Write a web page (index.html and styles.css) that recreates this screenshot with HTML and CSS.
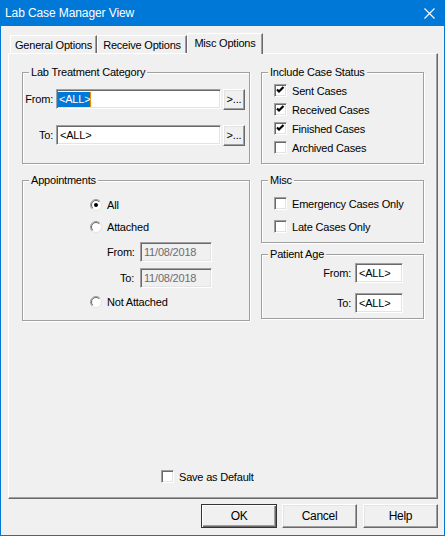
FILE: index.html
```html
<!DOCTYPE html>
<html>
<head>
<meta charset="utf-8">
<title>Lab Case Manager View</title>
<link rel="stylesheet" href="styles.css">
</head>
<body>
<div class="window">
  <div class="titlebar">
    <span class="title">Lab Case Manager View</span>
    <svg class="close" width="11" height="11" viewBox="0 0 11 11"><path d="M0.5 0.5 L10.5 10.5 M10.5 0.5 L0.5 10.5" stroke="#fff" stroke-width="1.1" fill="none"/></svg>
  </div>
  <div class="dialog">
    <div class="tabs">
      <div class="tab tab-general">General Options</div>
      <div class="tab tab-receive">Receive Options</div>
      <div class="tab tab-misc">Misc Options</div>
    </div>
    <div class="panel">
      <div class="columns">
        <div class="col col-left">
          <div class="group group-ltc">
            <span class="legend">Lab Treatment Category</span>
            <div class="field-row">
              <span class="lbl">From:</span>
              <div class="edit edit-wide"><span class="sel">&lt;ALL&gt;</span></div>
              <div class="btn btn-browse">&gt;...</div>
            </div>
            <div class="field-row row-to">
              <span class="lbl">To:</span>
              <div class="edit edit-wide"><span class="val">&lt;ALL&gt;</span></div>
              <div class="btn btn-browse">&gt;...</div>
            </div>
          </div>
          <div class="group group-appt">
            <span class="legend">Appointments</span>
            <div class="radio-row">
              <svg class="radio" width="12" height="12" viewBox="0 0 12 12"><circle cx="6" cy="6" r="5.5" fill="#fff" stroke="#e3e3e3"/><path d="M2.1 9.9 A5.5 5.5 0 0 1 9.9 2.1" stroke="#a0a0a0" fill="none"/><path d="M2.8 9.2 A4.5 4.5 0 0 1 9.2 2.8" stroke="#696969" fill="none"/><circle cx="6" cy="6" r="2" fill="#000"/></svg>
              <span>All</span>
            </div>
            <div class="radio-row radio-attached">
              <svg class="radio" width="12" height="12" viewBox="0 0 12 12"><circle cx="6" cy="6" r="5.5" fill="#fff" stroke="#e3e3e3"/><path d="M2.1 9.9 A5.5 5.5 0 0 1 9.9 2.1" stroke="#a0a0a0" fill="none"/><path d="M2.8 9.2 A4.5 4.5 0 0 1 9.2 2.8" stroke="#696969" fill="none"/></svg>
              <span>Attached</span>
            </div>
            <div class="sub-row">
              <span class="lbl-date">From:</span>
              <div class="edit edit-date"><span class="val">11/08/2018</span></div>
            </div>
            <div class="sub-row">
              <span class="lbl-date">To:</span>
              <div class="edit edit-date"><span class="val">11/08/2018</span></div>
            </div>
            <div class="radio-row radio-notattached">
              <svg class="radio" width="12" height="12" viewBox="0 0 12 12"><circle cx="6" cy="6" r="5.5" fill="#fff" stroke="#e3e3e3"/><path d="M2.1 9.9 A5.5 5.5 0 0 1 9.9 2.1" stroke="#a0a0a0" fill="none"/><path d="M2.8 9.2 A4.5 4.5 0 0 1 9.2 2.8" stroke="#696969" fill="none"/></svg>
              <span>Not Attached</span>
            </div>
          </div>
        </div>
        <div class="col col-right">
          <div class="group group-status">
            <span class="legend">Include Case Status</span>
            <div class="check-row">
              <span class="cb"><svg width="11" height="11" viewBox="0 0 11 11"><path d="M2 4.5 L4 6.5 L8.5 2" stroke="#000" stroke-width="2.2" fill="none"/></svg></span>
              <span>Sent Cases</span>
            </div>
            <div class="check-row">
              <span class="cb"><svg width="11" height="11" viewBox="0 0 11 11"><path d="M2 4.5 L4 6.5 L8.5 2" stroke="#000" stroke-width="2.2" fill="none"/></svg></span>
              <span>Received Cases</span>
            </div>
            <div class="check-row">
              <span class="cb"><svg width="11" height="11" viewBox="0 0 11 11"><path d="M2 4.5 L4 6.5 L8.5 2" stroke="#000" stroke-width="2.2" fill="none"/></svg></span>
              <span>Finished Cases</span>
            </div>
            <div class="check-row">
              <span class="cb"></span>
              <span>Archived Cases</span>
            </div>
          </div>
          <div class="group group-misc">
            <span class="legend">Misc</span>
            <div class="check-row">
              <span class="cb"></span>
              <span>Emergency Cases Only</span>
            </div>
            <div class="check-row check-late">
              <span class="cb"></span>
              <span>Late Cases Only</span>
            </div>
          </div>
          <div class="group group-age">
            <span class="legend">Patient Age</span>
            <div class="age-row">
              <span class="lbl-age">From:</span>
              <div class="edit edit-age"><span class="val">&lt;ALL&gt;</span></div>
            </div>
            <div class="age-row age-to">
              <span class="lbl-age">To:</span>
              <div class="edit edit-age"><span class="val">&lt;ALL&gt;</span></div>
            </div>
          </div>
        </div>
      </div>
      <div class="save-row">
        <span class="cb"></span>
        <span>Save as Default</span>
      </div>
    </div>
    <div class="buttons">
      <div class="btn btn-cmd btn-ok">OK</div>
      <div class="btn btn-cmd">Cancel</div>
      <div class="btn btn-cmd">Help</div>
    </div>
  </div>
</div>
</body>
</html>
```

FILE: styles.css
```css
* { box-sizing: border-box; }

body {
  margin: 0;
  background: #f0f0f0;
  font-family: "Liberation Sans", Arial, sans-serif;
  font-size: 11px;
  letter-spacing: -0.2px;
  color: #000;
}

.window {
  width: 445px;
  height: 536px;
  border: 1px solid #0078d7;
  border-top: 0;
  background: #f0f0f0;
  display: flex;
  flex-direction: column;
}

.titlebar {
  height: 26px;
  margin: 0 -1px;
  background: #0078d7;
  color: #fff;
  display: flex;
  align-items: center;
  justify-content: space-between;
  padding: 0 10px 0 5px;
}

.title {
  font-size: 12px;
  letter-spacing: -0.1px;
  line-height: 14px;
}

.close { display: block; }

.dialog {
  flex: 1;
  display: flex;
  flex-direction: column;
  padding: 7px 6px 7px 7px;
}

.tabs {
  display: flex;
  align-items: flex-end;
  height: 20px;
  padding-left: 2px;
  position: relative;
  z-index: 1;
}

.tab {
  height: 18px;
  border-top: 1px solid #fff;
  border-left: 1px solid #fff;
  border-right: 1px solid #696969;
  box-shadow: inset -1px 0 #a0a0a0;
  display: flex;
  align-items: center;
  justify-content: center;
  white-space: nowrap;
}

.tab-general { width: 87px; }
.tab-receive { width: 90px; }

.tab-misc {
  width: 76px;
  height: 21px;
  margin-bottom: -1px;
  background: #f0f0f0;
  padding-bottom: 3px;
}

.panel {
  height: 446px;
  border-top: 1px solid #fff;
  border-left: 1px solid #fff;
  border-right: 1px solid #696969;
  border-bottom: 1px solid #696969;
  box-shadow: inset -1px -1px #a0a0a0;
  padding: 18px 0 0 13px;
  display: flex;
  flex-direction: column;
}

.columns {
  display: flex;
  gap: 11px;
}

.col { display: flex; flex-direction: column; }
.col-left { width: 228px; }
.col-right { width: 163px; }

.group {
  position: relative;
  border: 1px solid #a0a0a0;
  box-shadow: inset 1px 1px #fff, 1px 1px #fff;
}

.legend {
  position: absolute;
  top: -7px;
  left: 6px;
  padding: 0 2px;
  background: #f0f0f0;
  line-height: 13px;
  white-space: nowrap;
}

/* Lab Treatment Category */
.group-ltc {
  height: 92px;
  padding: 16px 0 0 2px;
}

.field-row {
  display: flex;
  align-items: flex-start;
}

.row-to { margin-top: 15px; }

.lbl {
  width: 28px;
  text-align: right;
  line-height: 20px;
  margin-right: 3px;
}

.edit {
  height: 20px;
  background: #fff;
  border-top: 1px solid #a0a0a0;
  border-left: 1px solid #a0a0a0;
  border-right: 1px solid #fff;
  border-bottom: 1px solid #fff;
  box-shadow: inset 1px 1px #696969, inset -1px -1px #e3e3e3;
  display: flex;
  align-items: center;
  padding-left: 1px;
  white-space: nowrap;
  overflow: hidden;
}

.edit-wide { width: 165px; }

.sel {
  background: #0078d7;
  color: #fff;
  line-height: 15px;
  padding: 0 0 0 1px;
  border-right: 1px solid #f08a00;
}

.val { padding-left: 2px; line-height: 14px; }

.btn {
  background: #f0f0f0;
  border-top: 1px solid #fff;
  border-left: 1px solid #fff;
  border-right: 1px solid #696969;
  border-bottom: 1px solid #696969;
  box-shadow: inset -1px -1px #a0a0a0, inset 1px 1px #e3e3e3;
  display: flex;
  align-items: center;
  justify-content: center;
  white-space: nowrap;
}

.btn-browse {
  width: 22px;
  height: 21px;
  margin-left: 2px;
  padding-bottom: 1px;
}

/* Appointments */
.group-appt {
  height: 141px;
  margin-top: 16px;
  padding: 14px 0 0 67px;
}

.radio-row {
  display: flex;
  align-items: center;
  height: 19px;
  gap: 5px;
}

.radio { display: block; flex: none; }

.radio-attached { margin-top: 3px; }
.radio-notattached { margin-top: 4px; }

.sub-row {
  display: flex;
  align-items: center;
  margin-left: 17px;
  margin-top: 6px;
}

.lbl-date {
  width: 27px;
  text-align: right;
  margin-right: 6px;
}

.edit-date {
  width: 72px;
  background: #f0f0f0;
  color: #6d6d6d;
}

/* Include case status */
.group-status {
  height: 92px;
  padding: 8px 0 0 12px;
}

.check-row {
  display: flex;
  align-items: center;
  height: 19px;
  gap: 5px;
  white-space: nowrap;
}

.cb {
  width: 13px;
  height: 13px;
  flex: none;
  background: #fff;
  border-top: 1px solid #a0a0a0;
  border-left: 1px solid #a0a0a0;
  border-right: 1px solid #fff;
  border-bottom: 1px solid #fff;
  box-shadow: inset 1px 1px #696969, inset -1px -1px #e3e3e3;
  display: flex;
}

.cb svg { display: block; }

/* Misc */
.group-misc {
  height: 63px;
  margin-top: 16px;
  padding: 13px 0 0 12px;
}

.check-late { margin-top: 4px; }

/* Patient age */
.group-age {
  height: 65px;
  margin-top: 11px;
  padding: 8px 20px 0 0;
}

.age-row {
  display: flex;
  justify-content: flex-end;
  align-items: center;
}

.age-to { margin-top: 10px; }

.lbl-age { margin-right: 4px; }

.edit-age { width: 48px; }

/* Save as default */
.save-row {
  margin-top: auto;
  margin-bottom: 12px;
  margin-left: 139px;
  height: 19px;
  display: flex;
  align-items: center;
  gap: 5px;
}

/* Command buttons */
.buttons {
  margin-top: 5px;
  display: flex;
  justify-content: flex-end;
  gap: 6px;
}

.btn-cmd {
  width: 75px;
  height: 24px;
  font-size: 12px;
  letter-spacing: -0.3px;
}

.btn-ok {
  width: 76px;
  margin-right: -1px;
  border: 1px solid #333;
  box-shadow: inset 1px 1px #fff, inset -1px -1px #696969, inset -2px -2px #a0a0a0;
}
```
